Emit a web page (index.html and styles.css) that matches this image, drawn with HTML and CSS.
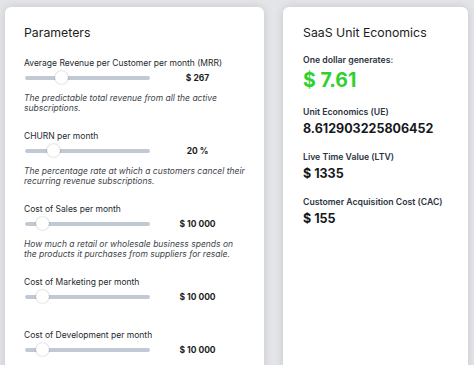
FILE: index.html
```html
<!DOCTYPE html>
<html lang="en">
<head>
  <meta charset="UTF-8">
  <meta name="viewport" content="width=device-width, initial-scale=1.0">
  <title>SaaS Unit Economics Calculator</title>
  <link rel="stylesheet" href="styles.css">
</head>
<body>

  <div class="layout">
    <!-- Parameters -->
    <div class="card params">
      <h2>Parameters</h2>

      <div class="param">
        <label for="mrr">Average Revenue per Customer per month (MRR)</label>
        <div class="slider-row">
          <input type="range" id="mrr" min="0" max="1000" value="267">
          <span class="value">$ 267</span>
        </div>
        <p class="hint">The predictable total revenue from all the active subscriptions.</p>
      </div>

      <div class="param">
        <label for="churn">CHURN per month</label>
        <div class="slider-row">
          <input type="range" id="churn" min="0" max="100" value="20">
          <span class="value">20 %</span>
        </div>
        <p class="hint">The percentage rate at which a customers cancel their recurring revenue subscriptions.</p>
      </div>

      <div class="param">
        <label for="sales">Cost of Sales per month</label>
        <div class="slider-row">
          <input type="range" id="sales" min="0" max="100000" value="10000">
          <span class="value">$ 10 000</span>
        </div>
        <p class="hint">How much a retail or wholesale business spends on the products it purchases from suppliers for resale.</p>
      </div>

      <div class="param no-hint">
        <label for="marketing">Cost of Marketing per month</label>
        <div class="slider-row">
          <input type="range" id="marketing" min="0" max="100000" value="10000">
          <span class="value">$ 10 000</span>
        </div>
      </div>

      <div class="param no-hint">
        <label for="development">Cost of Development per month</label>
        <div class="slider-row">
          <input type="range" id="development" min="0" max="100000" value="10000">
          <span class="value">$ 10 000</span>
        </div>
      </div>
    </div>

    <!-- Results -->
    <div class="card results">
      <h2>SaaS Unit Economics</h2>

      <div class="metric first">
        <div class="metric-label">One dollar generates:</div>
        <div class="metric-value big">$ 7.61</div>
      </div>

      <div class="metric">
        <div class="metric-label">Unit Economics (UE)</div>
        <div class="metric-value">8.612903225806452</div>
      </div>

      <div class="metric">
        <div class="metric-label">Live Time Value (LTV)</div>
        <div class="metric-value">$ 1335</div>
      </div>

      <div class="metric">
        <div class="metric-label">Customer Acquisition Cost (CAC)</div>
        <div class="metric-value">$ 155</div>
      </div>
    </div>
  </div>

</body>
</html>
```

FILE: styles.css
```css
body {
  font-family: Inter, "Noto Sans", sans-serif;
  background-color: #e3e5e8;
  color: #1f2328;
  margin: 0;
  padding: 0;
  overflow: hidden;
}

.layout {
  display: grid;
  grid-template-columns: 259px 185px;
  column-gap: 19px;
  padding: 7px 0 0 5px;
}

.card {
  background-color: white;
  border-radius: 6px;
  box-shadow: 0px 0px 10px rgba(0, 0, 0, 0.13);
  min-height: 420px;
}

h2 {
  font-size: 12.3px;
  line-height: 15px;
  font-weight: 400;
  color: #1a1d21;
  margin: 0;
}

/* Parameters card */
.params {
  padding: 18px 19px 0 19px;
}

.params h2 {
  margin-bottom: 17.5px;
}

.param {
  margin-bottom: 18px;
}

.param.no-hint {
  margin-bottom: 27px;
}

.param label {
  display: block;
  font-size: 8.5px;
  line-height: 11px;
  color: #25292e;
  margin-bottom: 3px;
}

.slider-row {
  display: flex;
  align-items: center;
  height: 12px;
}

.slider-row input[type=range] {
  -webkit-appearance: none;
  appearance: none;
  width: 125px;
  height: 13px;
  margin: 0 0 0 1px;
  background: transparent;
}

.slider-row input[type=range]::-webkit-slider-runnable-track {
  height: 4px;
  border-radius: 2px;
  background-color: #c1cad4;
}

.slider-row input[type=range]::-webkit-slider-thumb {
  -webkit-appearance: none;
  width: 13px;
  height: 13px;
  margin-top: -4.5px;
  border-radius: 50%;
  background-color: white;
  box-shadow: 0px 0px 2px rgba(0, 0, 0, 0.3);
}

.value {
  width: 96px;
  text-align: center;
  font-size: 8.5px;
  font-weight: 700;
  color: #1a1d21;
}

.hint {
  font-size: 8.5px;
  font-style: italic;
  line-height: 10px;
  color: #40454c;
  margin: 9px 0 0 0;
}

/* Results card */
.results {
  padding: 18px 18px 0 20px;
}

.results h2 {
  margin-bottom: 15.3px;
}

.metric {
  margin-bottom: 16px;
}

.metric.first {
  margin-bottom: 15px;
}

.metric-label {
  font-size: 8.7px;
  line-height: 11px;
  font-weight: 600;
  color: #2d3440;
  margin-bottom: 3px;
}

.metric-value {
  font-size: 12.5px;
  line-height: 15px;
  font-weight: 700;
  color: #16191d;
}

.metric-value.big {
  font-size: 19.5px;
  line-height: 24px;
  color: #2ed12e;
  margin-top: -1px;
}
```
